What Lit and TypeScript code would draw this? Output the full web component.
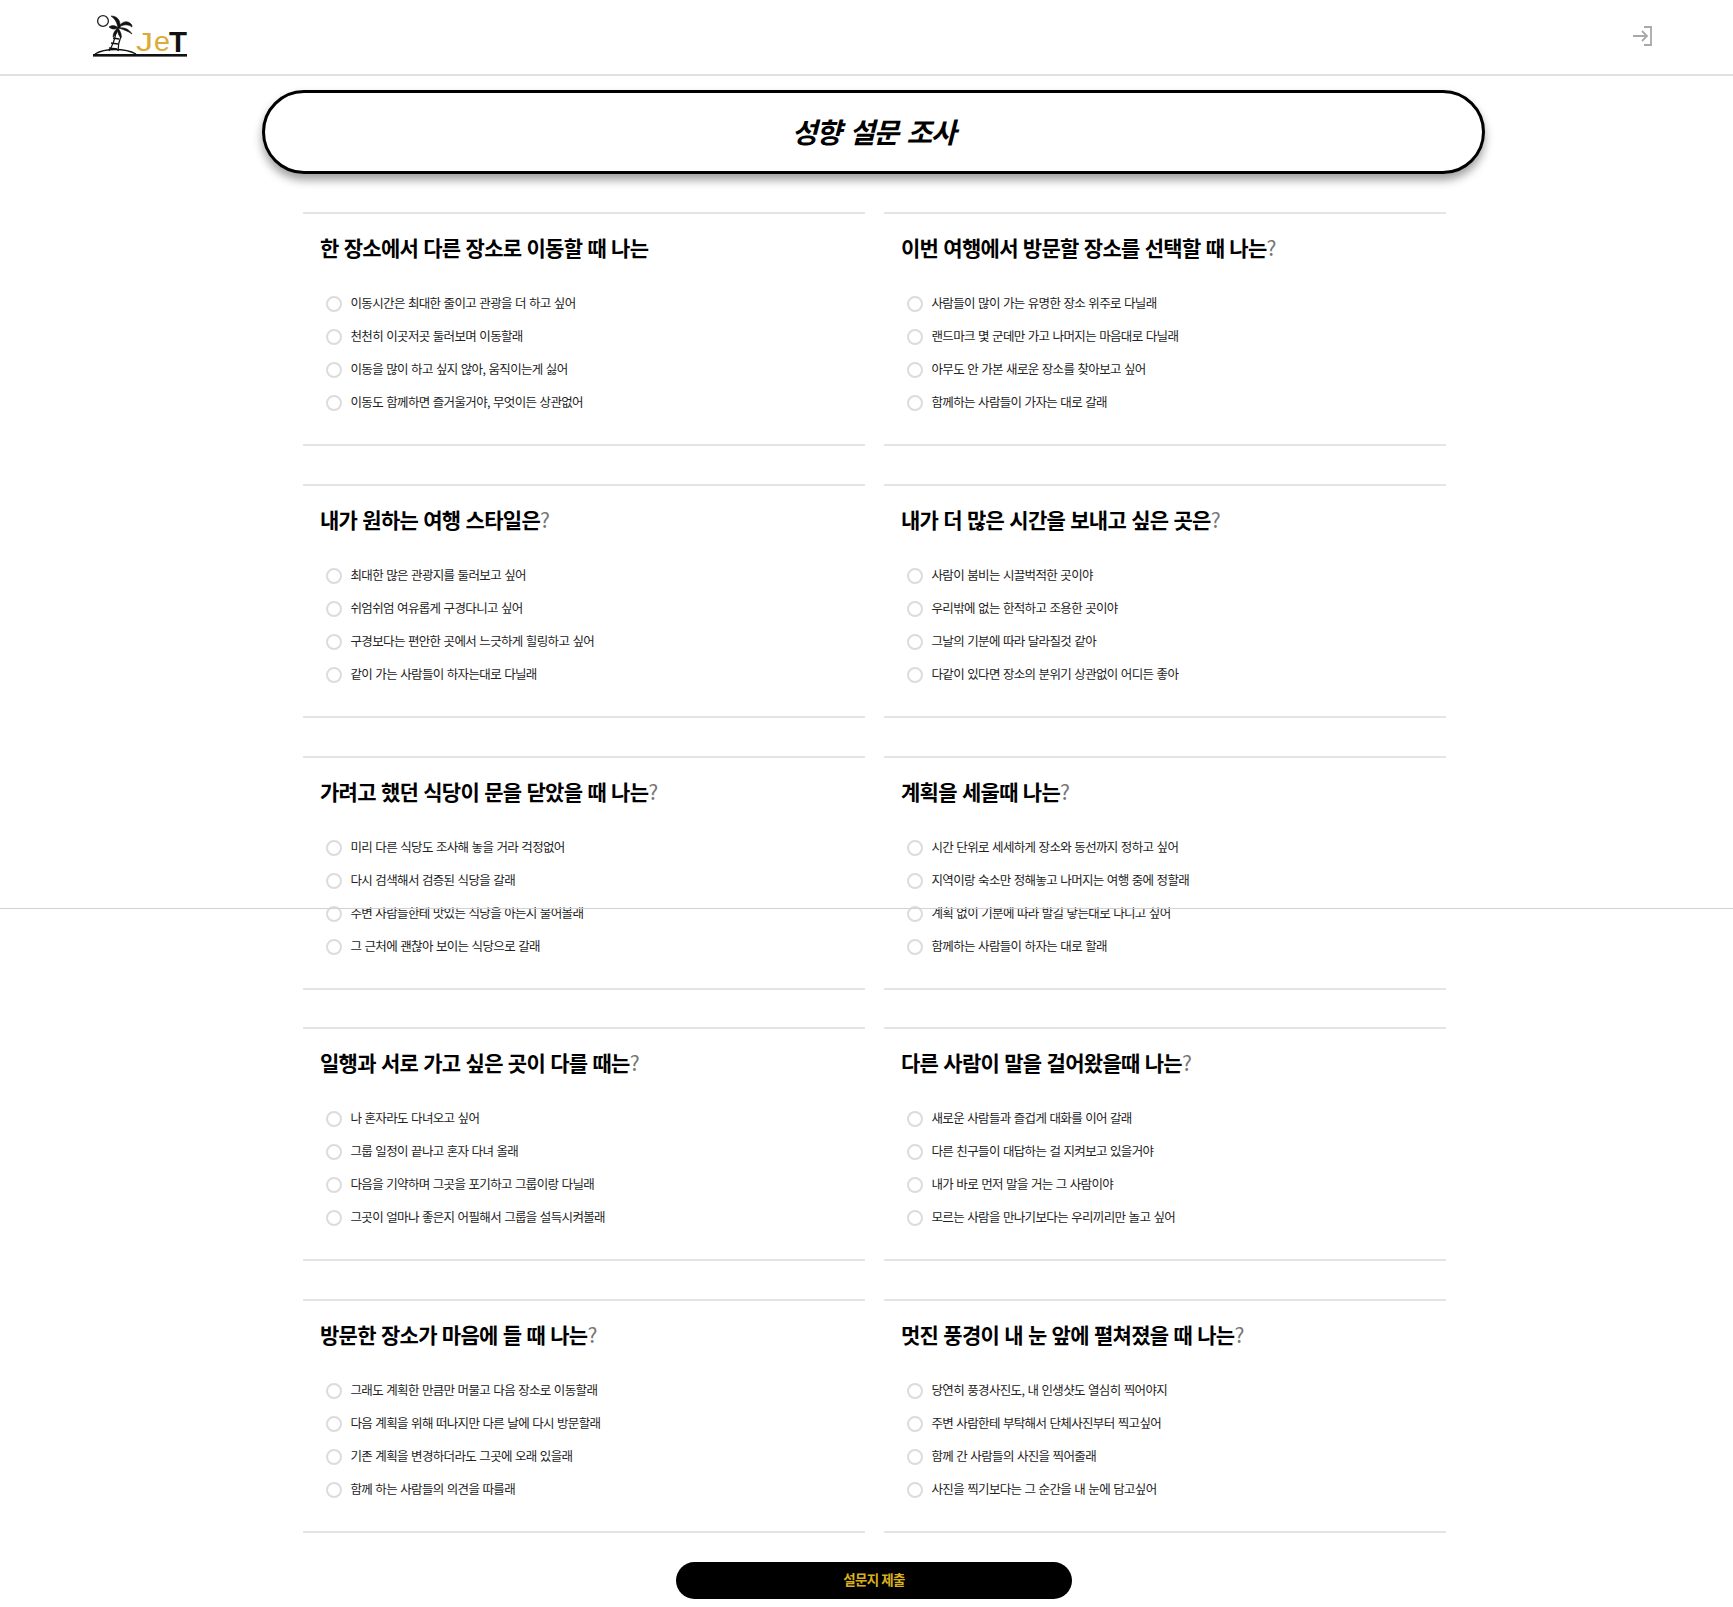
import { LitElement, html, css, svg } from "lit";
import { customElement } from "lit/decorators.js";

const QUESTIONS: { q: string; o: string[] }[] = [
  { q: "한 장소에서 다른 장소로 이동할 때 나는", o: ["이동시간은 최대한 줄이고 관광을 더 하고 싶어", "천천히 이곳저곳 둘러보며 이동할래", "이동을 많이 하고 싶지 않아, 움직이는게 싫어", "이동도 함께하면 즐거울거야, 무엇이든 상관없어"] },
  { q: "이번 여행에서 방문할 장소를 선택할 때 나는?", o: ["사람들이 많이 가는 유명한 장소 위주로 다닐래", "랜드마크 몇 군데만 가고 나머지는 마음대로 다닐래", "아무도 안 가본 새로운 장소를 찾아보고 싶어", "함께하는 사람들이 가자는 대로 갈래"] },
  { q: "내가 원하는 여행 스타일은?", o: ["최대한 많은 관광지를 둘러보고 싶어", "쉬엄쉬엄 여유롭게 구경다니고 싶어", "구경보다는 편안한 곳에서 느긋하게 힐링하고 싶어", "같이 가는 사람들이 하자는대로 다닐래"] },
  { q: "내가 더 많은 시간을 보내고 싶은 곳은?", o: ["사람이 붐비는 시끌벅적한 곳이야", "우리밖에 없는 한적하고 조용한 곳이야", "그날의 기분에 따라 달라질것 같아", "다같이 있다면 장소의 분위기 상관없이 어디든 좋아"] },
  { q: "가려고 했던 식당이 문을 닫았을 때 나는?", o: ["미리 다른 식당도 조사해 놓을 거라 걱정없어", "다시 검색해서 검증된 식당을 갈래", "주변 사람들한테 맛있는 식당을 아는지 물어볼래", "그 근처에 괜찮아 보이는 식당으로 갈래"] },
  { q: "계획을 세울때 나는?", o: ["시간 단위로 세세하게 장소와 동선까지 정하고 싶어", "지역이랑 숙소만 정해놓고 나머지는 여행 중에 정할래", "계획 없이 기분에 따라 발길 닿는대로 다니고 싶어", "함께하는 사람들이 하자는 대로 할래"] },
  { q: "일행과 서로 가고 싶은 곳이 다를 때는?", o: ["나 혼자라도 다녀오고 싶어", "그룹 일정이 끝나고 혼자 다녀 올래", "다음을 기약하며 그곳을 포기하고 그룹이랑 다닐래", "그곳이 얼마나 좋은지 어필해서 그룹을 설득시켜볼래"] },
  { q: "다른 사람이 말을 걸어왔을때 나는?", o: ["새로운 사람들과 즐겁게 대화를 이어 갈래", "다른 친구들이 대답하는 걸 지켜보고 있을거야", "내가 바로 먼저 말을 거는 그 사람이야", "모르는 사람을 만나기보다는 우리끼리만 놀고 싶어"] },
  { q: "방문한 장소가 마음에 들 때 나는?", o: ["그래도 계획한 만큼만 머물고 다음 장소로 이동할래", "다음 계획을 위해 떠나지만 다른 날에 다시 방문할래", "기존 계획을 변경하더라도 그곳에 오래 있을래", "함께 하는 사람들의 의견을 따를래"] },
  { q: "멋진 풍경이 내 눈 앞에 펼쳐졌을 때 나는?", o: ["당연히 풍경사진도, 내 인생샷도 열심히 찍어야지", "주변 사람한테 부탁해서 단체사진부터 찍고싶어", "함께 간 사람들의 사진을 찍어줄래", "사진을 찍기보다는 그 순간을 내 눈에 담고싶어"] },
];

@customElement("app-root")
export class AppRoot extends LitElement {
  static styles = css`
    :host { display: block; position: relative; width: 1733px; height: 1607px; overflow: hidden; background: #fff; font-family: "Noto Sans CJK KR", "Noto Sans", sans-serif; color: #000; }
    .top { height: 74px; border-bottom: 2px solid #e0e0e0; display: flex; justify-content: space-between; padding: 0 79px 0 93px; align-items: flex-start; }
    .logo { width: 96px; height: 60px; margin-top: 10px; display: block; }
    .login { width: 24px; height: 24px; margin-top: 24px; display: block; }
    .pill { box-sizing: border-box; width: 1223px; height: 84px; margin: 14px 0 0 262px; border: 3px solid #000; border-radius: 42px; background: #fff; box-shadow: 0 6px 10px rgba(0,0,0,.38); display: flex; align-items: center; justify-content: center; font-size: 28px; font-weight: 700; font-style: italic; letter-spacing: -1.5px; word-spacing: 4px; padding-bottom: 3px; }
    .grid { display: grid; grid-template-columns: 562px 562px; column-gap: 19px; row-gap: 37.8px; margin: 38px 0 0 303px; }
    .card { box-sizing: border-box; height: 234px; border-top: 2px solid #e4e4e4; border-bottom: 2px solid #e4e4e4; padding: 16px 0 0 17px; }
    h2 { margin: 0; font-size: 21px; line-height: 34px; font-weight: 700; letter-spacing: -0.7px; word-spacing: 1px; height: 34px; }
    .qm { color: #777; font-weight: 400; }
    ul { list-style: none; margin: 22px 0 0; padding: 0 0 0 5.5px; }
    li { display: flex; align-items: center; height: 33px; font-size: 12.5px; letter-spacing: -0.65px; word-spacing: 1px; color: #222; }
    .radio { box-sizing: border-box; width: 16px; height: 16px; border: 2px solid #dcdcdc; border-radius: 50%; margin: 3px 9px 0 0; flex: none; }
    .submit { display: block; width: 396px; height: 37px; margin: 28.5px 0 0 676px; border: 0; border-radius: 19px; background: #000; color: #d9b01c; font: 700 13.5px "Noto Sans CJK KR", sans-serif; letter-spacing: -0.6px; padding: 0 0 2px; }
    .seam { position: absolute; left: 0; right: 0; top: 908px; height: 1px; background: #d2d2d2; }
  `;

  private logo() {
    return svg`
      <circle cx="10" cy="11" r="5.4" fill="none" stroke="#222" stroke-width="1.3"/>
      <path d="M25 18C24 12 22 9 18 6 24 6 28 10 27 18zM25 18c4-7 9-8 13-4 1 1 1 2 1 3-4-3-9-3-14 1zM26 18c5-1 10 1 13 6-4-3-8-4-13-6zM25 18c-3-3-6-3-9-1 2 2 6 3 9 1zM25 18c2 3 4 6 3 10-2-2-4-6-3-10zM25 18c-3 2-5 5-5 9 3-2 5-5 5-9z" fill="#111" stroke="#111" stroke-width=".6"/>
      <path d="M23 22c-1 7-3 13-7 19M28 26c-2 5-3 10-3 15M20 28l6 1M18 33l7 1M16 38l8 1" fill="none" stroke="#111" stroke-width="1.3"/>
      <path d="M2 44c10-6 30-6 41 0" fill="none" stroke="#111" stroke-width="1.3"/>
      <rect x="0" y="44" width="94" height="2.6" fill="#111"/>
      <text x="43" y="41" font-family="Liberation Sans, sans-serif" font-size="26" fill="#dcaa36" textLength="17" lengthAdjust="spacingAndGlyphs">J</text>
      <text x="61" y="41" font-family="Liberation Sans, sans-serif" font-size="27" fill="#dcaa36" textLength="16" lengthAdjust="spacingAndGlyphs">e</text>
      <text x="76" y="42" font-family="Liberation Sans, sans-serif" font-size="30" font-weight="700" fill="#111" textLength="18" lengthAdjust="spacingAndGlyphs">T</text>
    `;
  }

  private question(q: string) {
    return q.endsWith("?") ? html`${q.slice(0, -1)}<span class="qm">?</span>` : q;
  }

  render() {
    return html`
      <header class="top">
        <svg class="logo" viewBox="0 0 96 60">${this.logo()}</svg>
        <svg class="login" viewBox="0 0 24 24" fill="none" stroke="#a8a8a8" stroke-width="1.8">
          <path d="M14 3h7v18h-7M3 12h14M12 7l5 5-5 5"/>
        </svg>
      </header>
      <div class="pill">성향 설문 조사</div>
      <main class="grid">
        ${QUESTIONS.map((c) => html`
          <section class="card">
            <h2>${this.question(c.q)}</h2>
            <ul>
              ${c.o.map((t) => html`<li><span class="radio"></span><span>${t}</span></li>`)}
            </ul>
          </section>`)}
      </main>
      <button class="submit">설문지 제출</button>
      <div class="seam"></div>
    `;
  }
}
